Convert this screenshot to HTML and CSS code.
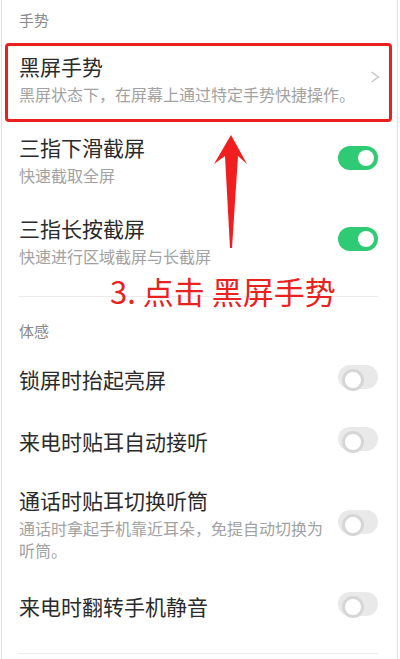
FILE: index.html
```html
<!DOCTYPE html>
<html lang="zh-CN">

<head>
  <meta charset="UTF-8">
  <meta name="viewport" content="width=device-width, initial-scale=1.0">
  <title>手势与体感</title>
  <link rel="stylesheet" href="styles.css">
</head>

<body>
  <div class="screen">
    <div class="group-title first">手势</div>

    <div class="item item-link">
      <div class="item-text">
        <div class="item-title">黑屏手势</div>
        <div class="item-desc">黑屏状态下，在屏幕上通过特定手势快捷操作。</div>
      </div>
      <svg class="chevron" width="10" height="12" viewBox="0 0 10 12">
        <polyline points="1.5,1 8.5,6 1.5,11" fill="none" stroke="#c4c4c4" stroke-width="1.4" />
      </svg>
      <div class="highlight"></div>
    </div>

    <div class="item">
      <div class="item-text">
        <div class="item-title">三指下滑截屏</div>
        <div class="item-desc">快速截取全屏</div>
      </div>
      <span class="switch on"></span>
    </div>

    <div class="item">
      <div class="item-text">
        <div class="item-title">三指长按截屏</div>
        <div class="item-desc">快速进行区域截屏与长截屏</div>
      </div>
      <span class="switch on"></span>
    </div>

    <div class="divider"></div>

    <div class="group-title second">体感</div>

    <div class="item single">
      <div class="item-text">
        <div class="item-title">锁屏时抬起亮屏</div>
      </div>
      <span class="switch"></span>
    </div>

    <div class="item single">
      <div class="item-text">
        <div class="item-title">来电时贴耳自动接听</div>
      </div>
      <span class="switch"></span>
    </div>

    <div class="item tall">
      <div class="item-text">
        <div class="item-title">通话时贴耳切换听筒</div>
        <div class="item-desc">通话时拿起手机靠近耳朵，免提自动切换为听筒。</div>
      </div>
      <span class="switch"></span>
    </div>

    <div class="item single end">
      <div class="item-text">
        <div class="item-title">来电时翻转手机静音</div>
      </div>
      <span class="switch"></span>
    </div>

    <div class="divider last"></div>

    <!-- tutorial annotation drawn over the screenshot -->
    <svg class="arrow" width="36" height="116" viewBox="0 0 36 116">
      <polygon points="18,1 34,30 25,22 19,114 17,114 12,22 1,30" fill="#f01e1e" />
    </svg>
    <div class="step-note">3. 点击 黑屏手势</div>
  </div>
</body>

</html>
```

FILE: styles.css
```css
* {
  box-sizing: border-box;
}

body {
  margin: 0;
  background-color: #fff;
  font-family: "Noto Sans CJK SC", "Noto Sans", sans-serif;
}

.screen {
  position: relative;
  width: 397px;
  height: 659px;
  margin-left: 1px;
  border-left: 1px solid #e2e2e2;
  border-right: 1px solid #e2e2e2;
  overflow: hidden;
}

.group-title {
  padding: 24px 17px 8px;
  font-size: 15px;
  line-height: 20px;
  color: #8a8a8a;
}

.group-title.first {
  padding-top: 10px;
  padding-bottom: 9px;
}

.item {
  position: relative;
  display: flex;
  align-items: center;
  padding: 14px 19px 15px 17px;
}

.item.single {
  padding-top: 16px;
  padding-bottom: 18px;
}

.item.tall {
  padding-top: 14px;
  padding-bottom: 16px;
}

.item.single.end {
  padding-top: 15px;
  padding-bottom: 17px;
}

.item-text {
  flex: 1;
}

.item-title {
  font-size: 21px;
  line-height: 26px;
  color: #2b2b2b;
}

.item-desc {
  margin-top: 4px;
  font-size: 16px;
  line-height: 22px;
  color: #a2a2a2;
}

.chevron {
  margin: 0 -2px 4px 0;
}

.highlight {
  position: absolute;
  top: 4px;
  bottom: -2px;
  left: 3px;
  right: 5px;
  border: 3px solid #ea1f1f;
  border-radius: 4px;
}

.switch {
  position: relative;
  flex: none;
  width: 40px;
  height: 24px;
  margin: 0 0 4px 9px;
  border-radius: 12px;
  background-color: #e9e9e9;
}

.switch::after {
  content: "";
  position: absolute;
  top: 4px;
  left: 4px;
  width: 16px;
  height: 16px;
  border-radius: 50%;
  border: 3px solid #d6d6d6;
  background-color: #fff;
}

.switch.on {
  background-color: #2fcb74;
}

.switch.on::after {
  left: 20px;
  border: none;
}

.divider {
  height: 1px;
  margin: 14px 19px 0 16px;
  background-color: #ececec;
}

.divider.last {
  margin-top: 16px;
}

.arrow {
  position: absolute;
  left: 211px;
  top: 134px;
}

.step-note {
  position: absolute;
  left: 108px;
  top: 275px;
  font-size: 31px;
  line-height: 31px;
  color: #e8231f;
  white-space: nowrap;
}
```
